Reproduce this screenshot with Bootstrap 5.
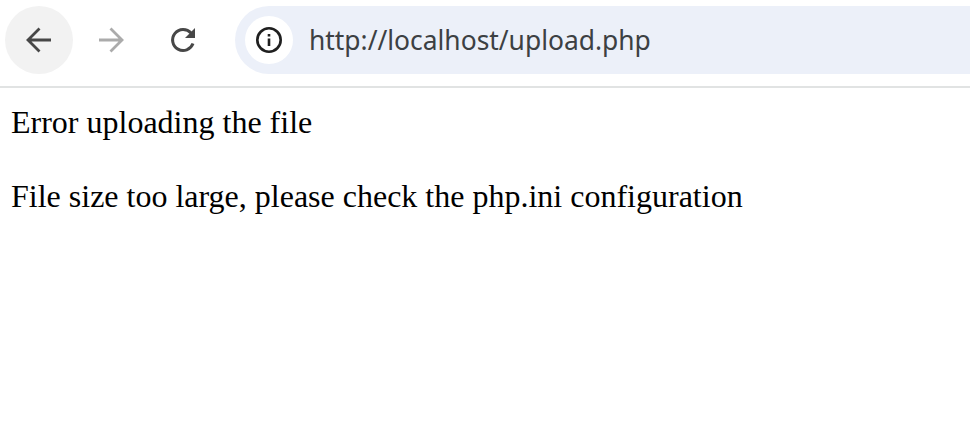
<!doctype html>
<html lang="en">
<head>
<meta charset="utf-8">
<title>upload</title>
<link href="https://cdn.jsdelivr.net/npm/bootstrap@5.3.0/dist/css/bootstrap.min.css" rel="stylesheet">
<style>
html,body{background:#fff;height:100%;overflow:hidden}
.chrome-bar{height:88px;border-bottom:2px solid #e1e3e3;background:#fff;padding:6px 0 0 5px}
.tool-btn{width:68px;height:68px;flex:none;border-radius:50%;background:transparent}
.tool-back{background:#f2f2f2}
.tool-fwd{margin-left:4px}
.tool-rel{margin-left:4px}
.omni{height:68px;margin-left:18px;border-radius:34px 0 0 34px;background:#ecf0f9;padding-left:10px;min-width:0}
.site-chip{width:48px;height:48px;flex:none;border-radius:50%;background:#fff}
.omni-url{margin-left:16px;font:26.4px/68px "Noto Sans",Roboto,sans-serif;color:#3c4043;white-space:nowrap}
.page-body{padding:16px 11px;font-family:"Liberation Serif","Times New Roman",serif;font-size:32px;line-height:37px;color:#000}
.page-body p{margin:0 0 37px}
</style>
</head>
<body>
<div class="chrome-bar d-flex align-items-start">
  <div class="tool-btn tool-back d-flex align-items-center justify-content-center">
    <svg width="32" height="32" viewBox="0 0 32 32" fill="none" stroke="#474747" stroke-width="2.800"><path d="M28 16H6M16.500 4.500 5 16l11.500 11.500"/></svg>
  </div>
  <div class="tool-btn tool-fwd d-flex align-items-center justify-content-center">
    <svg width="32" height="32" viewBox="0 0 32 32" fill="none" stroke="#ababab" stroke-width="2.800"><path d="M4 16h22M15.500 4.500 27 16 15.500 27.500"/></svg>
  </div>
  <div class="tool-btn tool-rel d-flex align-items-center justify-content-center">
    <svg width="32" height="32" viewBox="0 0 32 32" fill="none" stroke="#474747" stroke-width="3"><path d="M26 19.500A10.500 10.500 0 1 1 24 9"/><path d="M28 4v10H18z" fill="#474747" stroke="none"/></svg>
  </div>
  <div class="omni flex-grow-1 d-flex align-items-center">
    <div class="site-chip d-flex align-items-center justify-content-center">
      <svg width="30" height="30" viewBox="0 0 30 30" fill="none"><circle cx="15" cy="15" r="11.700" stroke="#1f1f1f" stroke-width="2.600"/><path d="M15 13.500V21M15 9v2.600" stroke="#1f1f1f" stroke-width="2.600"/></svg>
    </div>
    <div class="omni-url">http://localhost/upload.php</div>
  </div>
</div>
<div class="page-body">
  <p>Error uploading the file</p>
  <p>File size too large, please check the php.ini configuration</p>
</div>
</body>
</html>
